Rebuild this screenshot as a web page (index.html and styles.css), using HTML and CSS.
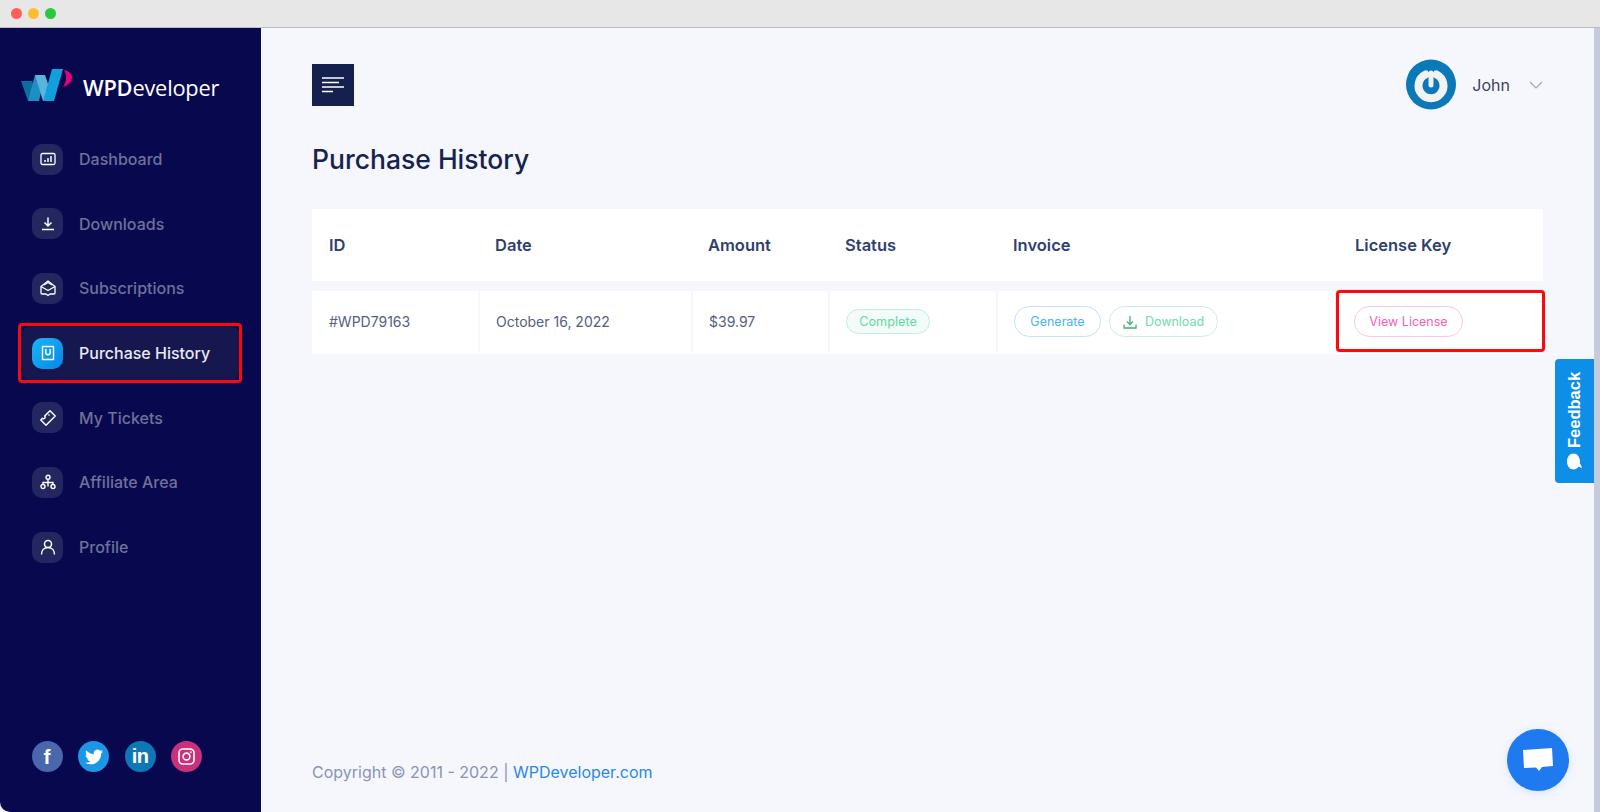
FILE: index.html
```html
<!DOCTYPE html>
<html lang="en">
<head>
<meta charset="utf-8">
<title>Purchase History</title>
<link rel="stylesheet" href="styles.css">
</head>
<body>
<div class="titlebar">
  <span class="dot dot-red"></span><span class="dot dot-yellow"></span><span class="dot dot-green"></span>
</div>
<div class="window">
  <aside class="sidebar">
    <div class="brand">
      <svg class="brand-mark" width="54" height="34" viewBox="0 0 54 34">
        <polygon points="0,12 11,12 18,32 7,32" fill="#0b6f9e"/>
        <polygon points="7,32 18,32 24,6 14,6" fill="#1c8fc4"/>
        <polygon points="14,6 24,6 33,32 22,32" fill="#5bb4dc"/>
        <polygon points="22,32 33,32 42,0 31,0" fill="#12a0dc"/>
        <path d="M43 1C54 3 54 14 42 18 46 12 46 6 43 1Z" fill="#e5007e"/>
      </svg>
      <span class="brand-name"><b>WPD</b>eveloper</span>
    </div>
    <nav class="nav">
      <a class="nav-item"><span class="nav-icon"><svg width="16" height="16" viewBox="0 0 16 16" fill="none" stroke="#fff" stroke-width="1.3"><rect x="1" y="2.5" width="14" height="11" rx="1.5"/><path d="M5 11V9M8 11V7M11 11V5" stroke-width="1.5"/></svg></span>Dashboard</a>
      <a class="nav-item"><span class="nav-icon"><svg width="16" height="16" viewBox="0 0 16 16" fill="none" stroke="#fff" stroke-width="1.5"><path d="M8 1.5v8M4.5 6.5 8 10l3.500-3.500M2 13.500h12"/></svg></span>Downloads</a>
      <a class="nav-item"><span class="nav-icon"><svg width="18" height="18" viewBox="0 0 18 18" fill="none" stroke="#fff" stroke-width="1.3" stroke-linejoin="round"><path d="M2 7.500 9 2l7 5.500V14a1 1 0 0 1-1 1h-4l-2 1.500L7 15H3a1 1 0 0 1-1-1z"/><path d="M2 7.500 9 11.500l7-4M5 6l4-2.500L13 6"/></svg></span>Subscriptions</a>
      <a class="nav-item nav-active"><span class="nav-icon nav-icon-active"><svg width="16" height="16" viewBox="0 0 16 16" fill="none" stroke="#fff" stroke-width="1.4"><path d="M2.500 1.500h11v13h-11z" stroke-linejoin="round"/><path d="M5.800 4v3.500a2.200 2.200 0 0 0 4.400 0V4" stroke-width="1.500"/></svg></span>Purchase History<span class="annotation"></span></a>
      <a class="nav-item"><span class="nav-icon"><svg width="18" height="18" viewBox="0 0 18 18" fill="none" stroke="#fff" stroke-width="1.500" stroke-linejoin="round"><path d="M11 1.800 16.200 7 7 16.200 1.800 11l1.700-1.700a1.500 1.500 0 0 0 2.200-2.200z"/><path d="M9.500 5.500l1 1" /></svg></span>My Tickets</a>
      <a class="nav-item"><span class="nav-icon"><svg width="16" height="16" viewBox="0 0 16 16" fill="none" stroke="#fff" stroke-width="1.400"><circle cx="8" cy="3.300" r="2"/><circle cx="3" cy="12.500" r="2"/><circle cx="13" cy="12.500" r="2"/><path d="M8 5.300V12.500M3 10.500V8.500h10v2"/></svg></span>Affiliate Area</a>
      <a class="nav-item"><span class="nav-icon"><svg width="16" height="16" viewBox="0 0 16 16" fill="none" stroke="#fff" stroke-width="1.500"><circle cx="8" cy="5" r="3.500"/><path d="M1.500 15.500c0-4 2.500-7 6.500-7s6.500 3 6.500 7"/></svg></span>Profile</a>
    </nav>
    <div class="socials">
      <a class="social social-fb">f</a>
      <a class="social social-tw"><svg width="18" height="18" viewBox="0 0 24 24" fill="#fff"><path d="M23.953 4.570a10 10 0 01-2.825.775 4.958 4.958 0 002.163-2.723c-.951.555-2.005.959-3.127 1.184a4.920 4.920 0 00-8.384 4.482C7.690 8.095 4.067 6.130 1.640 3.162a4.822 4.822 0 00-.666 2.475c0 1.710.870 3.213 2.188 4.096a4.904 4.904 0 01-2.228-.616v.060a4.923 4.923 0 003.946 4.827 4.996 4.996 0 01-2.212.085 4.936 4.936 0 004.604 3.417 9.867 9.867 0 01-6.102 2.105c-.390 0-.779-.023-1.170-.067a13.995 13.995 0 007.557 2.209c9.053 0 13.998-7.496 13.998-13.985 0-.210 0-.420-.015-.630A9.935 9.935 0 0024 4.590z"/></svg></a>
      <a class="social social-in">in</a>
      <a class="social social-ig"><svg width="17" height="17" viewBox="0 0 17 17" fill="none" stroke="#fff" stroke-width="1.600"><rect x="1" y="1" width="15" height="15" rx="4"/><circle cx="8.500" cy="8.500" r="3.400"/><circle cx="12.800" cy="4.200" r=".6" fill="#fff" stroke-width=".6"/></svg></a>
    </div>
  </aside>
  <main class="main">
    <header class="topbar">
      <button class="menu-btn" aria-label="Menu">
        <svg width="22" height="16" viewBox="0 0 22 16" stroke="#fff" stroke-width="1.500"><path d="M0 1h22M0 5.500h17M0 10h22M0 14.500h11"/></svg>
      </button>
      <div class="user">
        <svg class="avatar" width="50" height="51" viewBox="0 0 50 51">
          <circle cx="25" cy="25.500" r="25" fill="#0b78b8"/>
          <path d="M19.500 15.500a12.500 12.500 0 1 0 11 0" fill="none" stroke="#f1f2f4" stroke-width="8" stroke-linecap="round"/>
          <path d="M25 14v12" stroke="#f1f2f4" stroke-width="5" stroke-linecap="round"/>
        </svg>
        <span class="user-name">John</span>
        <svg width="14" height="8" viewBox="0 0 14 8" fill="none" stroke="#9fa3bf" stroke-width="1.200"><path d="M1 1l6 6 6-6"/></svg>
      </div>
    </header>
    <h1 class="page-title">Purchase History</h1>
    <section class="table">
      <div class="row row-head">
        <div class="cell">ID</div><div class="cell">Date</div><div class="cell">Amount</div><div class="cell">Status</div><div class="cell">Invoice</div><div class="cell cell-license">License Key</div>
      </div>
      <div class="row row-body">
        <div class="cell">#WPD79163</div>
        <div class="cell">October 16, 2022</div>
        <div class="cell">$39.97</div>
        <div class="cell"><span class="badge">Complete</span></div>
        <div class="cell cell-actions">
          <a class="btn btn-blue">Generate</a>
          <a class="btn btn-green"><svg width="14" height="14" viewBox="0 0 14 14" fill="none" stroke="#3fb36f" stroke-width="1.300"><path d="M7 1v8M4 6.500 7 9.500l3-3M1 9.500V13h12V9.500"/></svg>Download</a>
        </div>
        <div class="cell cell-license">
          <a class="btn btn-pink">View License</a>
          <span class="annotation annotation-cell"></span>
        </div>
      </div>
    </section>
    <footer class="footer">Copyright © 2011 - 2022 | <a class="footer-link">WPDeveloper.com</a></footer>
  </main>
  <div class="gutter"></div>
  <a class="feedback"><svg class="feedback-icon" width="17" height="17" viewBox="0 0 17 17" fill="#fff"><path d="M8.500 1C4 1 .5 3.800.5 7.500c0 2 1 3.700 2.700 4.900-.2 1.300-.8 2.500-1.700 3.400 2 0 3.800-.8 5-2 .6.100 1.300.2 2 .2 4.500 0 8-2.900 8-6.500S13 1 8.500 1z"/></svg><span>Feedback</span></a>
  <a class="chat" aria-label="Chat"><svg width="32" height="26" viewBox="0 0 32 26" fill="#fff"><path d="M1 3 30 1l1 18-11 1-3 4-3-3.500L2 21z"/></svg></a>
</div>
</body>
</html>
```
FILE: styles.css
```css
* { box-sizing: border-box; }
html, body { height: 100%; }
body {
  margin: 0;
  display: flex;
  flex-direction: column;
  background: #f5f7fd;
  font-family: Inter, "Liberation Sans", sans-serif;
  overflow: hidden;
}
a { text-decoration: none; }

.titlebar {
  height: 28px;
  flex: none;
  display: flex;
  align-items: center;
  gap: 6px;
  padding: 0 0 1px 11px;
  background: #e7e7e7;
  border-bottom: 1px solid #bdbdbd;
}
.dot { width: 11px; height: 11px; border-radius: 50%; }
.dot-red { background: #ff5f57; }
.dot-yellow { background: #febc2e; }
.dot-green { background: #28c840; }

.window { position: relative; flex: 1; display: flex; min-height: 0; }

.sidebar {
  width: 261px;
  flex: none;
  display: flex;
  flex-direction: column;
  padding: 41px 21px 40px 21px;
  background: #08084f;
  border-bottom-left-radius: 10px;
}
.brand { display: flex; align-items: center; gap: 8px; height: 34px; }
.brand-mark { flex: none; }
.brand-name { margin-top: 2px; color: #fff; font-family: "Open Sans", sans-serif; font-size: 21.800px; letter-spacing: -.2px; }
.brand-name b { font-weight: 600; }

.nav { display: flex; flex-direction: column; margin-top: 28px; }
.nav-item {
  display: flex;
  align-items: center;
  gap: 16px;
  height: 56px;
  margin-bottom: 8.700px;
  padding-left: 11px;
  border-radius: 12px;
  color: #6f7199;
  font-size: 16px;
  font-weight: 500;
}
.nav-icon {
  width: 31px;
  height: 31px;
  flex: none;
  display: flex;
  align-items: center;
  justify-content: center;
  border-radius: 10px;
  background: #24265f;
}
.nav-active {
  position: relative;
  color: #e9eaf3;
  background: #17174f;
}
.nav-icon-active { background: linear-gradient(135deg, #19b6f6, #0786e8); }

.annotation {
  position: absolute;
  top: -2px;
  right: -2px;
  bottom: -2px;
  left: -3px;
  border: 3px solid #fb0a0d;
  border-radius: 4px;
}
.annotation-cell {
  top: -1px;
  right: -2px;
  bottom: 0;
  left: -2px;
  box-shadow: 0 0 1px #777;
}

.socials { margin-top: auto; display: flex; gap: 15.600px; padding-left: 10.500px; }
.social {
  width: 31px;
  height: 31px;
  border-radius: 50%;
  display: flex;
  align-items: center;
  justify-content: center;
  color: #fff;
  font-weight: 700;
  font-family: "Liberation Sans", sans-serif;
}
.social-fb { background: #4a66ac; font-size: 21px; }
.social-tw { background: #1c97e6; }
.social-in { background: #0e78b6; font-size: 20px; letter-spacing: -.5px; }
.social-ig { background: #c9327a; }

.main { flex: 1; min-width: 0; display: flex; flex-direction: column; padding: 31px 51px 28px 51px; }
.topbar { display: flex; align-items: center; justify-content: space-between; height: 51px; }
.menu-btn {
  width: 42px;
  height: 42px;
  display: flex;
  align-items: center;
  justify-content: center;
  padding: 0;
  border: 0;
  background: #14214f;
}
.user { display: flex; align-items: center; }
.avatar { margin-right: 16px; }
.user-name { margin-right: 19px; font-size: 16px; color: #3d4260; }
.page-title { margin: 29px 0 0; font-size: 26.500px; line-height: 40px; font-weight: 500; color: #15234f; }

.table { margin-top: 30px; display: flex; flex-direction: column; gap: 10px; }
.row { display: grid; grid-template-columns: 166px 213px 137px 168px 340px 1fr; background: #fff; }
.row-head { height: 72px; font-size: 16.500px; font-weight: 600; color: #2f3f6f; }
.row-body { height: 63px; font-size: 14px; color: #55607f; padding-bottom: 2px; }
.cell { display: flex; align-items: center; padding-left: 17px; }
.row-body .cell + .cell { border-left: 2px solid #f5f7fd; padding-left: 16px; }
.row-body .cell-actions { padding-left: 15px; gap: 8px; }
.cell-license { position: relative; padding-left: 19px; }
.row-body .cell-license { border-left: 0; padding-left: 20px; }

.badge {
  width: 84px;
  height: 25px;
  display: flex;
  align-items: center;
  justify-content: center;
  border: 1.500px solid #c4eedc;
  border-radius: 13px;
  background: #f3fbf8;
  color: #62d9a3;
  font-size: 12.700px;
}
.btn {
  height: 31px;
  display: flex;
  align-items: center;
  justify-content: center;
  gap: 8px;
  border-radius: 16px;
  font-size: 12.500px;
  border: 1.500px solid;
}
.btn-blue { width: 87px; color: #46b4f7; border-color: #bfe3fa; }
.btn-green { width: 109px; color: #6fdcaa; border-color: #c8f0de; }
.btn-pink { width: 109px; color: #f561b5; border-color: #fdc5e4; }

.footer { margin-top: auto; font-size: 16px; line-height: 24px; color: #8a92b6; }
.footer-link { color: #2b87e8; }

.gutter { width: 6px; flex: none; background: #c6cadd; }

.feedback {
  position: absolute;
  top: 331px;
  right: 6px;
  width: 39px;
  height: 124px;
  display: flex;
  align-items: center;
  justify-content: center;
  gap: 5px;
  writing-mode: vertical-rl;
  transform: rotate(180deg);
  background: #0d8fe8;
  border-radius: 0 4px 4px 0;
  color: #fff;
  font-family: "Liberation Sans", sans-serif;
  font-size: 16.500px;
  font-weight: 700;
}
.feedback-icon { transform: rotate(90deg); }
.chat {
  position: absolute;
  right: 31px;
  bottom: 21px;
  width: 62px;
  height: 62px;
  display: flex;
  align-items: center;
  justify-content: center;
  border-radius: 50%;
  background: #1f7aef;
  box-shadow: 0 2px 8px rgba(31, 122, 239, .15);
}
```
